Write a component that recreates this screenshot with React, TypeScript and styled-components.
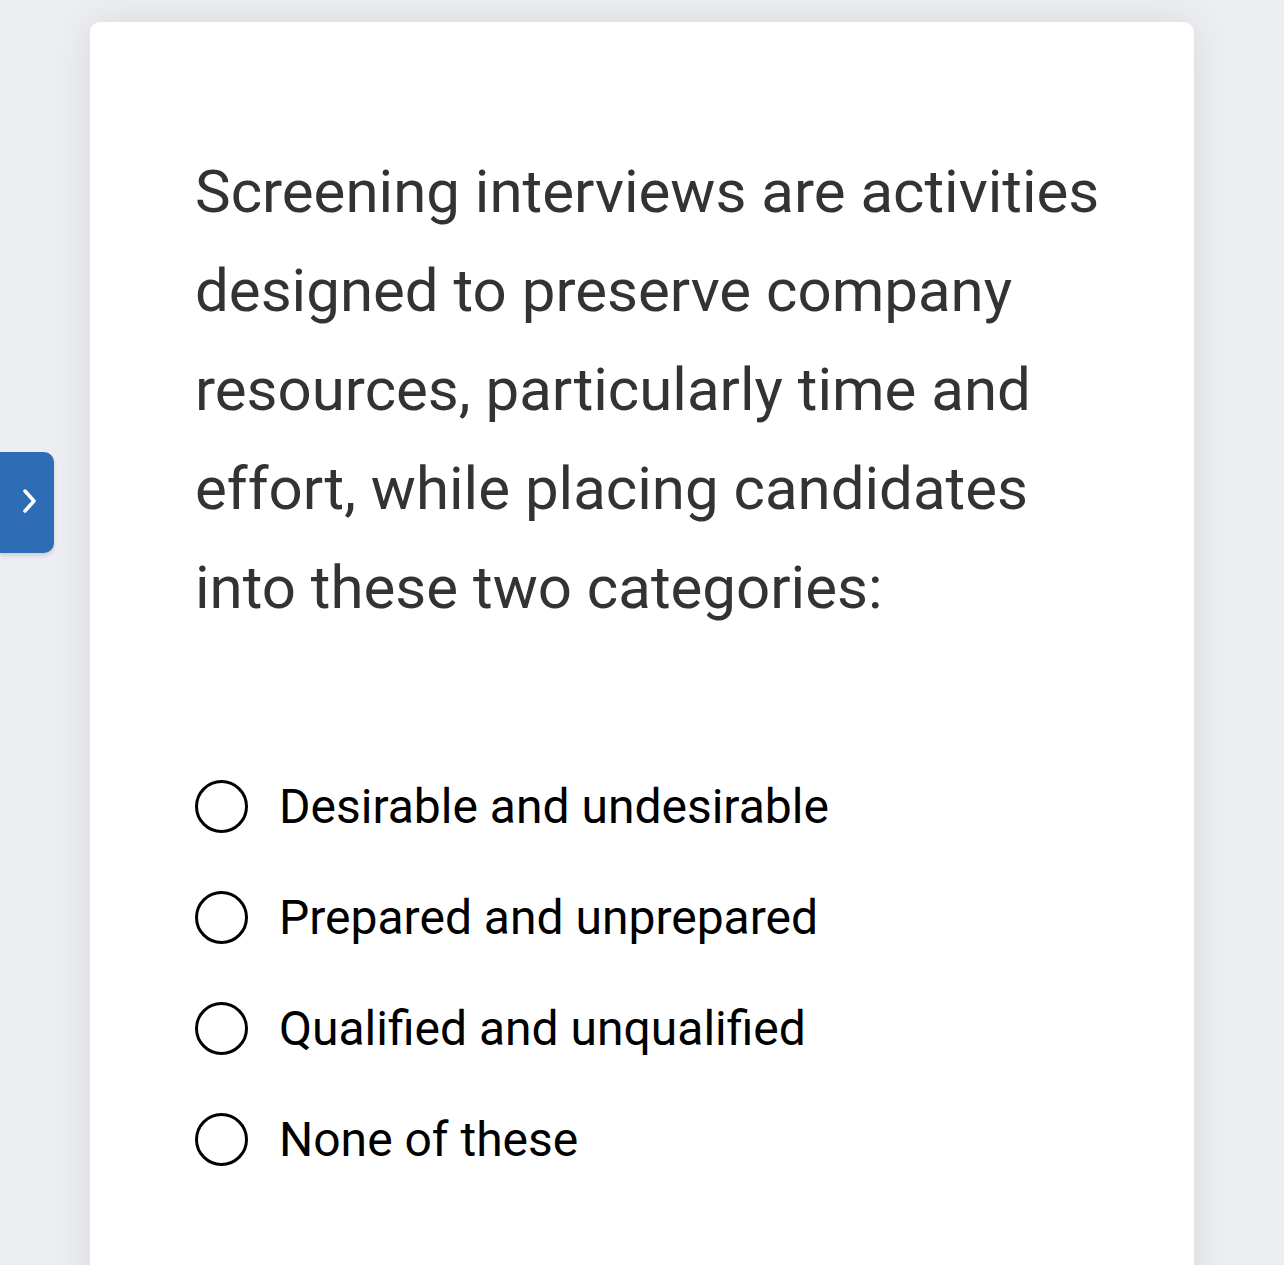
import React from "react";
import styled, { createGlobalStyle } from "styled-components";

const GlobalStyle = createGlobalStyle`
  html, body {
    margin: 0;
    padding: 0;
    background: #eceef1;
    font-family: Roboto, "Liberation Sans", sans-serif;
  }
`;

const options = [
  "Desirable and undesirable",
  "Prepared and unprepared",
  "Qualified and unqualified",
  "None of these",
];

const Page = styled.div`
  min-height: 1265px;
  padding: 22px 90px 0 90px;
  box-sizing: border-box;
  background: #eceef1;
  overflow: hidden;
`;

const Card = styled.main`
  background: #ffffff;
  border-radius: 10px 10px 0 0;
  box-shadow: 0 0 40px rgba(0, 0, 0, 0.09);
  min-height: 1300px;
  padding: 120px 88px 0 105px;
  box-sizing: border-box;
`;

const Question = styled.p`
  margin: 0;
  font-size: 60px;
  line-height: 99px;
  color: #333333;
  font-weight: 400;
`;

const OptionList = styled.ul`
  list-style: none;
  margin: 114px 0 0 0;
  padding: 0;
`;

const Option = styled.li`
  display: flex;
  align-items: center;
  height: 111px;
  gap: 31px;
  cursor: pointer;
`;

const Radio = styled.span`
  width: 53px;
  height: 53px;
  border: 3px solid #000;
  border-radius: 50%;
  box-sizing: border-box;
  flex-shrink: 0;
`;

const Label = styled.span`
  font-size: 48px;
  color: #000;
`;

const SideTab = styled.button`
  position: absolute;
  left: 0;
  top: 452px;
  width: 54px;
  height: 101px;
  border: none;
  border-radius: 0 10px 10px 0;
  background: #2e6db5;
  box-shadow: 0 3px 4px rgba(0, 0, 0, 0.12);
  display: flex;
  align-items: center;
  justify-content: center;
  padding: 0 0 4px 6px;
  cursor: pointer;
`;

export default function App() {
  return (
    <>
      <GlobalStyle />
      <Page>
        <Card>
          <Question>
            Screening interviews are activities designed to preserve company
            resources, particularly time and effort, while placing candidates
            into these two categories:
          </Question>
          <OptionList>
            {options.map((o) => (
              <Option key={o}>
                <Radio />
                <Label>{o}</Label>
              </Option>
            ))}
          </OptionList>
        </Card>
      </Page>
      <SideTab aria-label="open">
        <svg width="18" height="28" viewBox="0 0 18 28" fill="none">
          <path d="M4 4l9 10-9 10" stroke="#fff" strokeWidth="3.5" strokeLinecap="round" strokeLinejoin="round" />
        </svg>
      </SideTab>
    </>
  );
}
